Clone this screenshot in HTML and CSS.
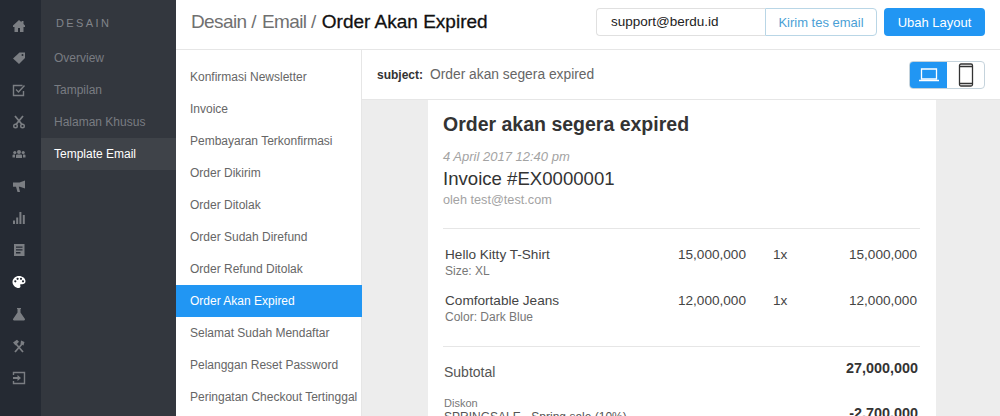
FILE: index.html
```html
<!DOCTYPE html>
<html lang="id">
<head>
    <meta charset="UTF-8">
    <title>Template Email - Order Akan Expired</title>
    <link rel="stylesheet" href="styles.css">
</head>
<body>
    <div class="app">
        <nav class="rail">
            <svg class="rail-icon" viewBox="0 0 14 14"><path d="M7 1 1 6.500V8h1.500v5h3.500V9h2v4h3.500V8H13V6.500L11.500 5V2h-2v1.200z"/></svg>
            <svg class="rail-icon" viewBox="0 0 14 14"><path d="M7.500 1.500H13V7l-6 6-6-5.500z"/><circle cx="10.500" cy="4" r="1" fill="#252a33"/></svg>
            <svg class="rail-icon" viewBox="0 0 14 14"><path class="line" d="M11.500 8v4.500h-10v-10h9"/><path class="line" d="m4 6.500 2.500 2.500 6-6.500"/></svg>
            <svg class="rail-icon" viewBox="0 0 14 14"><path class="thick" d="M3 1l7 8.500M11 1 4 9.500"/><circle class="line" cx="3.500" cy="11" r="1.800"/><circle class="line" cx="10.500" cy="11" r="1.800"/></svg>
            <svg class="rail-icon" viewBox="0 0 14 14"><circle cx="7" cy="5" r="2"/><circle cx="2.800" cy="5.500" r="1.600"/><circle cx="11.200" cy="5.500" r="1.600"/><path d="M4 11V8.500Q4 7.500 5 7.500h4q1 0 1 1V11zM.5 10.500V8.500q0-1 1-1H3v3zM11 10.500v-3h1.500q1 0 1 1v2z"/></svg>
            <svg class="rail-icon" viewBox="0 0 14 14"><path d="M13 1.500v8L8 7.800H6.800L8 13H5.500L4 7.800H1V3.500h6.500z"/></svg>
            <svg class="rail-icon" viewBox="0 0 14 14"><path d="M1 9.500h2V13H1zM4.200 6.500h2V13h-2zM7.400 1h2v12h-2zM10.800 4h2v9h-2z"/></svg>
            <svg class="rail-icon" viewBox="0 0 14 14"><path fill-rule="evenodd" d="M2 1h10.500v12H2zM4 3.500v1.300h6.500V3.500zM4 6.300v1.300h6.500V6.300zM4 9.100v1.300h4.500V9.100z"/></svg>
            <svg class="rail-icon is-active" viewBox="0 0 14 14"><path fill-rule="evenodd" d="M7 1c3.500 0 6.500 2.300 6.500 5.300 0 2.200-1.800 3-3.300 3H9c-.8 0-1.100.7-.7 1.300.5.800.1 2.400-1.500 2.400C3.500 13 .5 10.300.5 7 .5 3.700 3.500 1 7 1zM3.300 5.200a1.100 1.100 0 1 0 0 2.200 1.100 1.100 0 0 0 0-2.200zM5.600 2.700a1.100 1.100 0 1 0 0 2.200 1.100 1.100 0 0 0 0-2.200zM9 2.700a1.100 1.100 0 1 0 0 2.200 1.100 1.100 0 0 0 0-2.200zM11 5.200a1.100 1.100 0 1 0 0 2.200 1.100 1.100 0 0 0 0-2.200z"/></svg>
            <svg class="rail-icon" viewBox="0 0 14 14"><path d="M5 1h4v1H8.500v3.500l4.300 6.300c.5.800 0 1.700-.9 1.700H2.100c-.9 0-1.400-.9-.9-1.700l4.300-6.300V2H5z"/></svg>
            <svg class="rail-icon" viewBox="0 0 14 14"><path class="thick" d="M3 13 10 5M11 13 4 5"/><path d="M1 3.500 5 .8l2 2-3.500 3.700zM9 1.500l3.500 1.500-1 3.500-3-1.500z"/></svg>
            <svg class="rail-icon" viewBox="0 0 14 14"><path class="line" d="M6 1.500h6.500v11H1.500V10M1.500 4V1.500H6"/><path d="M1 6h4.500V4l3.500 3-3.500 3V8H1z"/></svg>
        </nav>

        <aside class="section-nav">
            <h2 class="section-title">DESAIN</h2>
            <a class="section-link">Overview</a>
            <a class="section-link">Tampilan</a>
            <a class="section-link">Halaman Khusus</a>
            <a class="section-link is-active">Template Email</a>
        </aside>

        <div class="main">
            <header class="topbar">
                <h1 class="crumbs">
                    <span class="crumb">Desain /</span>
                    <span class="crumb">Email /</span>
                    <strong>Order Akan Expired</strong>
                </h1>
                <div class="test-mail">
                    <div class="test-input">support@berdu.id</div>
                    <button class="btn-outline">Kirim tes email</button>
                </div>
                <button class="btn-primary">Ubah Layout</button>
            </header>

            <div class="body">
                <ul class="templates">
                    <li>Konfirmasi Newsletter</li>
                    <li>Invoice</li>
                    <li>Pembayaran Terkonfirmasi</li>
                    <li>Order Dikirim</li>
                    <li>Order Ditolak</li>
                    <li>Order Sudah Direfund</li>
                    <li>Order Refund Ditolak</li>
                    <li class="is-active">Order Akan Expired</li>
                    <li>Selamat Sudah Mendaftar</li>
                    <li>Pelanggan Reset Password</li>
                    <li>Peringatan Checkout Tertinggal</li>
                </ul>

                <section class="preview">
                    <div class="subject-bar">
                        <span class="subject-label">subject:</span>
                        <span class="subject-text">Order akan segera expired</span>
                        <div class="device-toggle">
                            <div class="device is-active">
                                <svg width="22" height="16" viewBox="0 0 22 16"><path class="device-line" d="M3.500 2h15v10h-15z"/><path class="device-line" d="M1 13.500h20"/></svg>
                            </div>
                            <div class="device">
                                <svg width="16" height="24" viewBox="0 0 16 24"><rect class="device-line" x="1.500" y="1" width="13" height="22" rx="1.500"/><path class="device-line" d="M1.500 3.500h13M1.500 20.500h13"/></svg>
                            </div>
                        </div>
                    </div>

                    <div class="canvas">
                        <article class="mail">
                            <h2 class="mail-title">Order akan segera expired</h2>
                            <p class="mail-date">4 April 2017 12:40 pm</p>
                            <p class="mail-invoice">Invoice #EX0000001</p>
                            <p class="mail-by">oleh test@test.com</p>

                            <div class="items">
                                <div class="item">
                                    <div class="item-name">Hello Kitty T-Shirt<small>Size: XL</small></div>
                                    <div class="item-price">15,000,000</div>
                                    <div class="item-qty">1x</div>
                                    <div class="item-total">15,000,000</div>
                                </div>
                                <div class="item">
                                    <div class="item-name">Comfortable Jeans<small>Color: Dark Blue</small></div>
                                    <div class="item-price">12,000,000</div>
                                    <div class="item-qty">1x</div>
                                    <div class="item-total">12,000,000</div>
                                </div>
                            </div>

                            <div class="sum-row">
                                <span class="sum-label">Subtotal</span>
                                <strong class="sum-value">27,000,000</strong>
                            </div>
                            <div class="sum-row discount">
                                <div class="sum-label"><small>Diskon</small>SPRINGSALE - Spring sale (10%)</div>
                                <strong class="sum-value">-2,700,000</strong>
                            </div>
                        </article>
                    </div>
                </section>
            </div>
        </div>
    </div>
</body>
</html>
```

FILE: styles.css
```css
* {
    box-sizing: border-box;
}
html, body {
    margin: 0;
    height: 100%;
    overflow: hidden;
}
p {
    margin: 0;
}
body {
    font-family: "Liberation Sans", Arial, sans-serif;
    color: #333;
    background-color: #fff;
}
.app {
    display: flex;
    height: 416px;
}

/* icon rail */
.rail {
    width: 41px;
    flex: none;
    background-color: #252a33;
    padding: 19px 4px 0 0;
    display: flex;
    flex-direction: column;
    align-items: center;
    gap: 18px;
}
.rail-icon {
    width: 14px;
    height: 14px;
    fill: #7b7e83;
    stroke: none;
}
.rail-icon.is-active {
    fill: #fff;
}
.line {
    fill: none;
    stroke: #7b7e83;
    stroke-width: 1.4;
}
.thick {
    fill: none;
    stroke: #7b7e83;
    stroke-width: 1.8;
}

/* section nav */
.section-nav {
    width: 135px;
    flex: none;
    background-color: #33373e;
}
.section-title {
    margin: 0;
    padding: 16px 0 0 15px;
    height: 42px;
    font-size: 11px;
    line-height: 14px;
    font-weight: normal;
    letter-spacing: 2.4px;
    color: #81848a;
}
.section-link {
    display: block;
    height: 32px;
    line-height: 32px;
    padding-left: 13px;
    font-size: 12px;
    color: #797c82;
}
.section-link.is-active {
    background-color: #3f4349;
    color: #fff;
}

/* top bar */
.main {
    flex: 1;
    min-width: 0;
    display: flex;
    flex-direction: column;
}
.topbar {
    height: 50px;
    flex: none;
    display: flex;
    align-items: center;
    padding: 0 15px 5px;
    border-bottom: 1px solid #e6e6e6;
}
.crumbs {
    margin: 0;
    flex: 1;
    font-size: 19px;
    font-weight: normal;
    display: flex;
    gap: 6px;
    color: #111;
}
.crumbs strong {
    font-weight: normal;
    -webkit-text-stroke: .3px #111;
}
.crumb {
    color: #707070;
    letter-spacing: -.6px;
}
.test-mail {
    display: flex;
    height: 28px;
    margin-right: 7px;
}
.test-input {
    width: 169px;
    border: 1px solid #e0e0e0;
    border-right: none;
    border-radius: 4px 0 0 4px;
    padding-left: 14px;
    font-size: 13.500px;
    line-height: 26px;
    color: #222;
}
.btn-outline {
    width: 112px;
    padding: 0;
    background-color: #fff;
    border: 1px solid #b9d6e6;
    border-radius: 0 4px 4px 0;
    font-family: inherit;
    font-size: 13px;
    color: #4a9fd6;
}
.btn-primary {
    width: 101px;
    height: 28px;
    padding: 0;
    background-color: #2196f3;
    border: none;
    border-radius: 4px;
    font-family: inherit;
    font-size: 13px;
    color: #fff;
}

/* template list */
.body {
    flex: 1;
    display: flex;
    min-height: 0;
}
.templates {
    width: 186px;
    flex: none;
    margin: 0;
    padding: 11px 0 0;
    list-style: none;
    background-color: #fff;
    border-right: 1px solid #e6e6e6;
}
.templates li {
    height: 32px;
    line-height: 32px;
    padding-left: 14px;
    font-size: 12px;
    color: #666;
    white-space: nowrap;
}
.templates li.is-active {
    background-color: #2196f3;
    color: #fff;
    margin-right: -1px;
}

/* subject bar */
.preview {
    flex: 1;
    min-width: 0;
    display: flex;
    flex-direction: column;
}
.subject-bar {
    height: 50px;
    flex: none;
    display: flex;
    align-items: center;
    padding: 0 15px;
    border-bottom: 1px solid #e6e6e6;
}
.subject-label {
    font-size: 12px;
    font-weight: bold;
    margin-right: 7px;
}
.subject-text {
    flex: 1;
    font-size: 13.800px;
    color: #666;
}
.device-toggle {
    display: flex;
    height: 28px;
    border: 1px solid #c5d3dc;
    border-radius: 4px;
    overflow: hidden;
}
.device {
    width: 37px;
    display: flex;
    align-items: center;
    justify-content: center;
    stroke: #333;
}
.device.is-active {
    background-color: #2196f3;
    stroke: #fff;
}
.device-line {
    fill: none;
    stroke-width: 1.300;
}

/* mail preview */
.canvas {
    flex: 1;
    min-height: 0;
    background-color: #ededed;
    padding: 0 64px 0 66px;
    overflow: hidden;
}
.mail {
    background-color: #fff;
    padding: 0 16px 0 15px;
    height: 100%;
}
.mail-title {
    margin: 0;
    padding-top: 12px;
    font-size: 19.500px;
    line-height: 24px;
    color: #333;
}
.mail-date {
    margin-top: 13px;
    font-size: 13px;
    line-height: 16px;
    font-style: italic;
    color: #a3a3a3;
}
.mail-invoice {
    margin-top: 3px;
    font-size: 18.600px;
    line-height: 22px;
    color: #333;
}
.mail-by {
    margin-top: 2px;
    font-size: 12.700px;
    line-height: 16px;
    color: #a3a3a3;
}
.items {
    margin-top: 20px;
    padding: 6px 3px 0 2px;
    border-top: 1px solid #e6e6e6;
    border-bottom: 1px solid #e6e6e6;
    height: 119px;
}
.item {
    display: flex;
    height: 46px;
    padding-top: 11px;
    font-size: 13.600px;
    line-height: 17px;
    color: #444;
}
.item-name {
    flex: 1;
}
.item-name small {
    display: block;
    font-size: 12px;
    line-height: 17px;
    color: #777;
}
.item-price {
    width: 120px;
    text-align: right;
}
.item-qty {
    width: 70px;
    padding-left: 27px;
}
.item-total {
    width: 101px;
    text-align: right;
}
.sum-row {
    display: flex;
    justify-content: space-between;
    padding: 13px 2px 0 1px;
    font-size: 14px;
    line-height: 17px;
    color: #555;
}
.sum-label {
    padding-top: 4px;
}
.sum-value {
    color: #333;
    font-size: 14.400px;
}
.discount {
    padding-top: 15px;
}
.discount .sum-label {
    padding-top: 0;
    font-size: 12px;
    line-height: 15px;
    color: #555;
}
.discount small {
    display: block;
    font-size: 11px;
    line-height: 14px;
    color: #777;
}
.discount .sum-value {
    margin-top: 9px;
}
```
